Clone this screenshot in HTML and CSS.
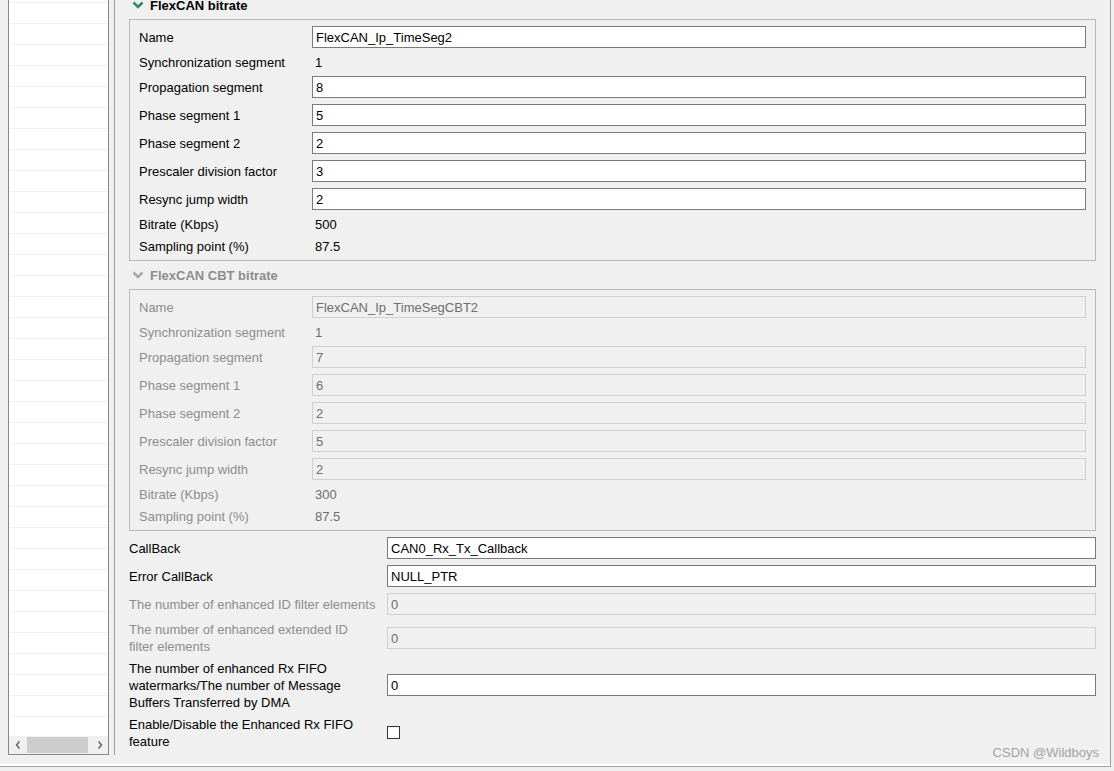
FILE: index.html
```html
<!DOCTYPE html>
<html lang="en">
<head>
<meta charset="utf-8">
<title>FlexCAN bitrate</title>
<link rel="stylesheet" href="styles.css">
</head>
<body>
<div class="frame">
  <div class="main">
    <aside class="sidebar">
      <div class="list">
        <div class="list-rows">
          <div class="row"></div><div class="row"></div><div class="row"></div><div class="row"></div>
          <div class="row"></div><div class="row"></div><div class="row"></div><div class="row"></div>
          <div class="row"></div><div class="row"></div><div class="row"></div><div class="row"></div>
          <div class="row"></div><div class="row"></div><div class="row"></div><div class="row"></div>
          <div class="row"></div><div class="row"></div><div class="row"></div><div class="row"></div>
          <div class="row"></div><div class="row"></div><div class="row"></div><div class="row"></div>
          <div class="row"></div><div class="row"></div><div class="row"></div><div class="row"></div>
          <div class="row"></div><div class="row"></div><div class="row"></div><div class="row"></div>
          <div class="row"></div><div class="row"></div><div class="row"></div><div class="row"></div>
        </div>
      </div>
      <div class="hscroll">
        <div class="arrow"><svg width="6" height="8" viewBox="0 0 6 8"><path d="M4.5 0.5 L1.5 4 L4.5 7.5" fill="none" stroke="#606060" stroke-width="1.4"/></svg></div>
        <div class="track"><div class="thumb"></div></div>
        <div class="arrow"><svg width="6" height="8" viewBox="0 0 6 8"><path d="M1.5 0.5 L4.5 4 L1.5 7.5" fill="none" stroke="#606060" stroke-width="1.4"/></svg></div>
      </div>
    </aside>
    <div class="divider"></div>
    <section class="content">
      <div class="section-head">
        <svg class="chev" width="12" height="8" viewBox="0 0 12 8"><path d="M1.5 1.5 L6 6 L10.5 1.5" fill="none" stroke="#2e8a68" stroke-width="2.6"/></svg>
        <span class="head-text">FlexCAN bitrate</span>
      </div>
      <div class="group">
        <div class="lbl">Name</div><div class="field">FlexCAN_Ip_TimeSeg2</div>
        <div class="lbl">Synchronization segment</div><div class="val">1</div>
        <div class="lbl">Propagation segment</div><div class="field">8</div>
        <div class="lbl">Phase segment 1</div><div class="field">5</div>
        <div class="lbl">Phase segment 2</div><div class="field">2</div>
        <div class="lbl">Prescaler division factor</div><div class="field">3</div>
        <div class="lbl">Resync jump width</div><div class="field">2</div>
        <div class="lbl">Bitrate (Kbps)</div><div class="val">500</div>
        <div class="lbl">Sampling point (%)</div><div class="val">87.5</div>
      </div>

      <div class="section-head off">
        <svg class="chev" width="12" height="8" viewBox="0 0 12 8"><path d="M1.5 1.5 L6 6 L10.5 1.5" fill="none" stroke="#a8a8a8" stroke-width="2.6"/></svg>
        <span class="head-text">FlexCAN CBT bitrate</span>
      </div>
      <div class="group disabled">
        <div class="lbl">Name</div><div class="field">FlexCAN_Ip_TimeSegCBT2</div>
        <div class="lbl">Synchronization segment</div><div class="val">1</div>
        <div class="lbl">Propagation segment</div><div class="field">7</div>
        <div class="lbl">Phase segment 1</div><div class="field">6</div>
        <div class="lbl">Phase segment 2</div><div class="field">2</div>
        <div class="lbl">Prescaler division factor</div><div class="field">5</div>
        <div class="lbl">Resync jump width</div><div class="field">2</div>
        <div class="lbl">Bitrate (Kbps)</div><div class="val">300</div>
        <div class="lbl">Sampling point (%)</div><div class="val">87.5</div>
      </div>

      <div class="settings">
        <div class="slbl">CallBack</div><div class="field">CAN0_Rx_Tx_Callback</div>
        <div class="slbl">Error CallBack</div><div class="field">NULL_PTR</div>
        <div class="slbl off">The number of enhanced ID filter elements</div><div class="field off">0</div>
        <div class="slbl off multi">The number of enhanced extended ID<br>filter elements</div><div class="field off">0</div>
        <div class="slbl multi">The number of enhanced Rx FIFO<br>watermarks/The number of Message<br>Buffers Transferred by DMA</div><div class="field">0</div>
        <div class="slbl multi">Enable/Disable the Enhanced Rx FIFO<br>feature</div><div class="check-cell"><span class="checkbox"></span></div>
      </div>
    </section>
  </div>
</div>
<div class="watermark">CSDN @Wildboys</div>
</body>
</html>
```

FILE: styles.css
```css
* { box-sizing: border-box; }
html, body { margin: 0; height: 100%; }
body {
  background: #f0f0f0;
  font-family: "Liberation Sans", Arial, sans-serif;
  font-size: 13px;
  color: #000;
  overflow: hidden;
  position: relative;
}

.frame {
  width: 1111px;
  height: 767px;
  border-right: 1px solid #a0a0a0;
  border-bottom: 1px solid #a0a0a0;
  box-shadow: inset 0 -2px 0 #fff;
  display: flex;
  flex-direction: column;
}

.main {
  display: flex;
  height: 755px;
  padding-left: 8px;
  overflow: hidden;
}

/* left list */
.sidebar {
  width: 101px;
  flex: none;
  border: 1px solid #828790;
  border-top: 0;
  background: #fff;
  display: flex;
  flex-direction: column;
}
.list { flex: 1; overflow: hidden; }
.list-rows { margin-top: -18px; }
.row {
  height: 21px;
  margin-left: 1px;
  border-bottom: 1px solid #f0f0f0;
}
.hscroll {
  height: 18px;
  flex: none;
  background: #f0f0f0;
  display: flex;
  align-items: center;
}
.arrow {
  width: 17px;
  height: 18px;
  display: flex;
  align-items: center;
  justify-content: center;
}
.track { flex: 1; height: 18px; display: flex; align-items: center; }
.thumb {
  width: 61px;
  height: 16px;
  margin-left: 1px;
  background: #cdcdcd;
}

.divider {
  width: 1px;
  flex: none;
  margin-left: 5px;
  background: #a0a0a0;
}

/* content */
.content {
  flex: 1;
  min-width: 0;
  padding: 0 14px;
  margin-top: -9px;
}
.section-head {
  height: 28px;
  display: flex;
  align-items: center;
  font-weight: bold;
}
.head-text { line-height: 10px; padding-top: 2px; }
.section-head.off { color: #8d8d8d; }
.chev { margin: 0 6px 0 3px; flex: none; }

.group {
  border: 1px solid #b9b9b9;
  padding: 6px 9px;
  display: grid;
  grid-template-columns: 173px 1fr;
  row-gap: 6px;
  align-items: center;
}
.lbl { line-height: 14px; padding-top: 2px; white-space: nowrap; }
.val { line-height: 14px; padding-top: 2px; padding-left: 3px; }
.disabled .lbl { color: #8d8d8d; }
.disabled .val { color: #6d6d6d; }

.field {
  height: 22px;
  border: 1px solid #7a7a7a;
  background: #fff;
  padding: 2px 3px 0;
  line-height: 18px;
  white-space: nowrap;
  overflow: hidden;
}
.disabled .field,
.field.off {
  border-color: #cfcfcf;
  background: #f0f0f0;
  color: #6d6d6d;
}

.settings {
  margin-top: 6px;
  display: grid;
  grid-template-columns: 258px 1fr;
  row-gap: 6px;
  align-items: center;
}
.slbl { line-height: 14px; padding-top: 2px; white-space: nowrap; }
.slbl.multi { line-height: 17px; padding-top: 0; margin-bottom: -1px; }
.slbl.off { color: #8d8d8d; }
.check-cell { display: flex; align-items: center; height: 22px; }
.checkbox {
  width: 13px;
  height: 13px;
  border: 1px solid #333;
  background: #fff;
}

.watermark {
  position: absolute;
  right: 15px;
  top: 745px;
  color: #a3a3a3;
  font-size: 13px;
}
```
